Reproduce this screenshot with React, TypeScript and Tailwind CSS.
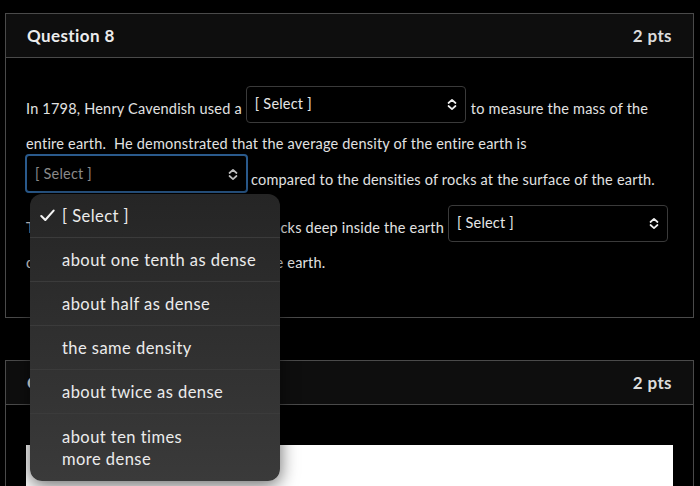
import React from "react";

const font = { fontFamily: "Lato, 'Open Sans', sans-serif" };

const UpDown = ({ className = "" }: { className?: string }) => (
  <svg width="12" height="13" viewBox="0 0 12 13" className={className} fill="none">
    <path d="M2.5 5 L6 1.8 L9.5 5 M2.5 8 L6 11.2 L9.5 8" stroke="currentColor" strokeWidth="1.7" strokeLinecap="round" strokeLinejoin="round" />
  </svg>
);

const Select = ({ width, focused = false, muted = false }: { width: string; focused?: boolean; muted?: boolean }) => (
  <div
    className={`flex shrink-0 items-start justify-between rounded-[4px] bg-black pl-[8px] pr-[7px] ${width} ${
      focused ? "h-[39px] border-2 border-[#2a5a8c] pt-[8px]" : "h-[37px] border border-[#3a3a3a] pt-[7px]"
    }`}
  >
    <span className={`text-[14.5px] leading-[20px] ${muted ? "text-[#8a8a8a]" : "text-[#e6e6e6]"}`}>[ Select ]</span>
    <UpDown className={`mt-[4px] ${muted ? "text-[#bdbdbd]" : "text-[#eeeeee]"}`} />
  </div>
);

const options = ["about one tenth as dense", "about half as dense", "the same density", "about twice as dense"];

const Dropdown = () => (
  <div className="absolute left-[4px] top-[40px] z-10 w-[250px] overflow-hidden rounded-[12px] bg-gradient-to-b from-[#252525] to-[#3a3a3a] text-[16.5px] tracking-[0.45px] text-[#ececec] shadow-[0_4px_18px_rgba(0,0,0,0.6)]">
    <div className="flex h-[44px] items-center border-b border-[#3b3b3b] pl-[10px]">
      <svg width="15" height="13" viewBox="0 0 15 13" className="mr-[7px]" fill="none">
        <path d="M1.3 7 L5.3 11 L13.6 1.6" stroke="#f2f2f2" strokeWidth="2.1" strokeLinecap="round" strokeLinejoin="round" />
      </svg>
      <span>[ Select ]</span>
    </div>
    {options.map((o) => (
      <div key={o} className="flex h-[44px] items-center border-b border-[#3b3b3b] pl-[32px]">
        {o}
      </div>
    ))}
    <div className="h-[67px] pl-[32px] pt-[12px] leading-[22px]">
      about ten times
      <br />
      more dense
    </div>
  </div>
);

const Card = ({ title, children }: { title: string; children: React.ReactNode }) => (
  <div className="ml-[5px] mr-[6px] border border-[#4a4a4a] bg-black">
    <div className="flex h-[44px] items-center justify-between border-b border-[#4a4a4a] bg-[#0e0e0e] px-[21px] text-[17px] font-bold tracking-[0.4px] text-[#ececec]">
      <span>{title}</span>
      <span className="text-[#dcdcdc]">2 pts</span>
    </div>
    {children}
  </div>
);

export default function App() {
  return (
    <div className="h-[486px] w-[700px] overflow-hidden bg-black pt-[13px]" style={font}>
      <Card title="Question 8">
        <div className="px-[20px] pb-[44px] pt-[28px] text-[14.5px] leading-[20px] tracking-[0.2px] text-[#e2e2e2]">
          <div className="flex items-end gap-[4px]">
            <span className="mb-[4px]">In 1798, Henry Cavendish used a</span>
            <Select width="w-[220px]" />
            <span className="mb-[4px] ml-[1px]">to measure the mass of the</span>
          </div>
          <div className="mt-[11px]">entire earth.&nbsp; He demonstrated that the average density of the entire earth is</div>
          <div className="relative flex items-end gap-[3px]">
            <div className="ml-[-1px]">
              <Select width="w-[223px]" focused muted />
            </div>
            <span className="mb-[3px]">compared to the densities of rocks at the surface of the earth.</span>
            <Dropdown />
          </div>
          <div className="mt-[12px] flex items-end gap-[4px]">
            <span className="mb-[4px]">This suggests that the density of the rocks deep inside the earth</span>
            <Select width="w-[220px]" />
          </div>
          <div className="mt-[11px]">compared to rocks at the surface of the earth.</div>
        </div>
      </Card>
      <div className="h-[42px]" />
      <Card title="Question 9">
        <div className="px-[20px] pt-[40px]">
          <div className="h-[60px] bg-white" />
        </div>
      </Card>
    </div>
  );
}
